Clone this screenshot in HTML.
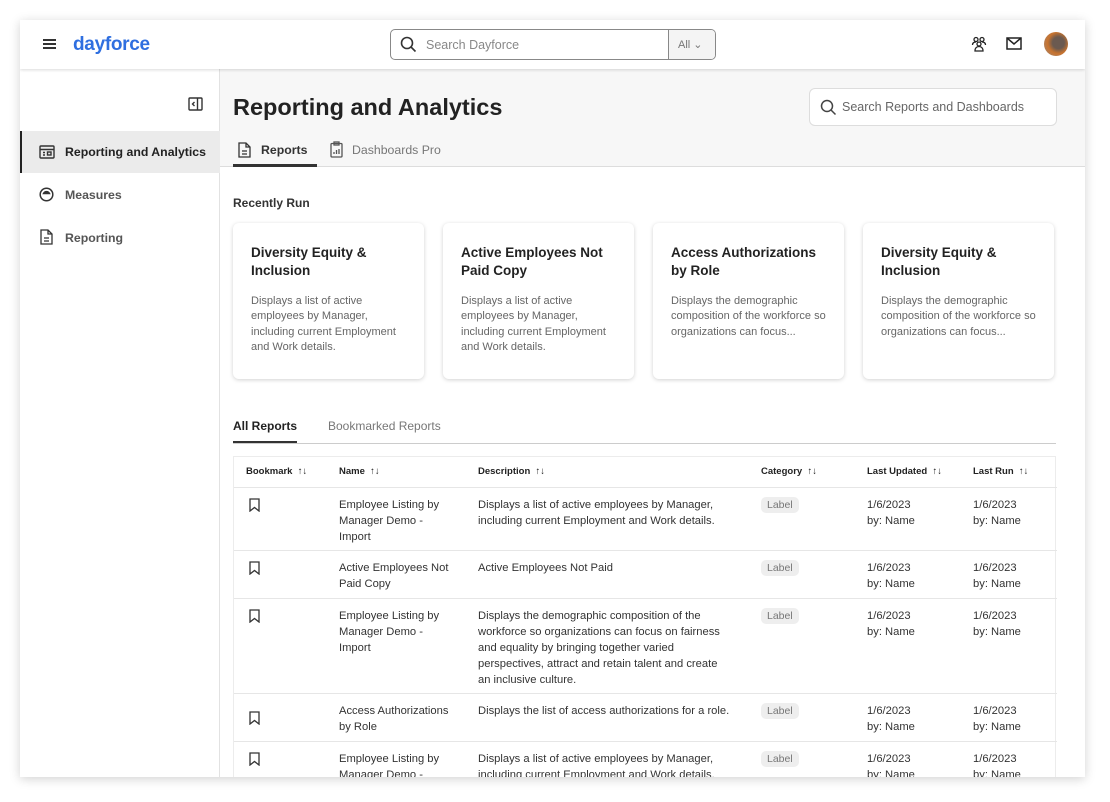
<!DOCTYPE html>
<html><head><meta charset="utf-8"><style>
*{box-sizing:border-box;margin:0;padding:0}
body{width:1110px;height:802px;background:#fff;font-family:"Liberation Sans",sans-serif;color:#222;position:relative;overflow:hidden}
.win{position:absolute;left:20px;top:20px;width:1065px;height:757px;background:#fff;box-shadow:0 2px 10px rgba(0,0,0,.18);overflow:hidden}
.top{position:absolute;left:0;top:0;width:1065px;height:49px;background:#fff;box-shadow:0 1px 3px rgba(0,0,0,.15);z-index:2}
.side{position:absolute;left:0;top:49px;width:200px;height:708px;border-right:1px solid #e2e2e2;background:#fff}
.main{position:absolute;left:200px;top:49px;width:865px;height:708px;background:#fff}
.hdr{position:absolute;left:0;top:0;width:865px;height:98px;background:#f7f7f7;border-bottom:1px solid #ddd}
.abs{position:absolute}
.card{position:absolute;top:154px;width:191px;height:156px;background:#fff;border-radius:6px;box-shadow:0 1px 4px rgba(0,0,0,.18);padding:21px 18px}
.card h3{font-size:13.5px;line-height:17.5px;font-weight:bold;color:#222;margin-bottom:15px}
.card p{font-size:11px;line-height:15.3px;color:#666}
.th{position:absolute;top:9px;font-size:9.5px;font-weight:bold;color:#222}
.row{position:absolute;left:0;width:823px;border-top:1px solid #e6e6e6}
.c{position:absolute;top:9px;font-size:11.2px;line-height:16px;color:#333}
.lbl{position:absolute;top:9px;left:527px;background:#eee;color:#777;font-size:10.5px;border-radius:5px;padding:2px 6px}
</style></head><body>
<div class="win">
<div class="top">
 <div class="abs" style="left:23px;top:19px;width:13px;height:2px;background:#333;box-shadow:0 4px 0 #333,0 8px 0 #333"></div>
 <div class="abs" style="left:53px;top:14px;font-size:19px;font-weight:bold;color:#2f6fe0;letter-spacing:-0.3px">dayforce</div>
 <div class="abs" style="left:370px;top:9px;width:326px;height:31px;border:1px solid #888;border-radius:5px;background:#fff;overflow:hidden">
  <svg class="abs" style="left:9px;top:6px" width="17" height="17" viewBox="0 0 17 17"><circle cx="7" cy="7" r="5.5" fill="none" stroke="#333" stroke-width="1.6"/><path d="M11 11l4.5 4.5" stroke="#333" stroke-width="1.6"/></svg>
  <div class="abs" style="left:35px;top:8px;font-size:12.5px;color:#888">Search Dayforce</div>
  <div class="abs" style="left:277px;top:0;width:49px;height:31px;border-left:1px solid #888;background:#f4f4f4;font-size:11px;color:#777;padding:8px 0 0 9px">All &#8964;</div>
 </div>
 <svg class="abs" style="left:951px;top:16px" width="16" height="16" viewBox="0 0 16 16" fill="none" stroke="#222" stroke-width="1.3"><circle cx="5" cy="3.5" r="2"/><circle cx="11" cy="3.5" r="2"/><circle cx="8" cy="8" r="2"/><path d="M1.5 9c0-2 1.5-3 3.5-3M14.5 9c0-2-1.5-3-3.5-3M4 15c0-3 1.8-4.5 4-4.5s4 1.5 4 4.5z"/></svg>
 <svg class="abs" style="left:986px;top:17px" width="16" height="13" viewBox="0 0 16 13" fill="none" stroke="#222" stroke-width="1.5"><rect x="1" y="1" width="14" height="11"/><path d="M1 1l7 6 7-6"/></svg>
 <div class="abs" style="left:1024px;top:12px;width:24px;height:24px;border-radius:50%;background:radial-gradient(circle at 60% 45%,#6b5a50 0 30%,#c8732e 55%,#9a8a80 100%)"></div>
</div>
<div class="side">
 <svg class="abs" style="left:168px;top:28px" width="15" height="14" viewBox="0 0 15 14" fill="none" stroke="#333" stroke-width="1.4"><rect x="1" y="1" width="13" height="12" rx="1"/><path d="M9.5 1v12M6.5 5l-2 2 2 2"/></svg>
 <div class="abs" style="left:0;top:62px;width:200px;height:42px;background:#ebebeb;border-left:2px solid #222"></div>
 <svg class="abs" style="left:19px;top:76px" width="16" height="14" viewBox="0 0 16 14" fill="none" stroke="#333" stroke-width="1.4"><rect x="1" y="1" width="14" height="12" rx="1"/><path d="M1 4.5h14M4 7.5h2M4 10h2"/><rect x="8.5" y="7" width="3.5" height="3"/></svg>
 <div class="abs" style="left:45px;top:76px;font-size:12.3px;font-weight:bold;color:#222">Reporting and Analytics</div>
 <svg class="abs" style="left:19px;top:118px" width="15" height="15" viewBox="0 0 15 15" fill="none" stroke="#333" stroke-width="1.5"><circle cx="7.5" cy="7.5" r="6.3"/><path d="M4.5 6.5a3.3 3.3 0 0 1 6 0z" fill="#333"/></svg>
 <div class="abs" style="left:45px;top:119px;font-size:12.3px;font-weight:bold;color:#555">Measures</div>
 <svg class="abs" style="left:20px;top:160px" width="13" height="16" viewBox="0 0 13 16" fill="none" stroke="#333" stroke-width="1.3"><path d="M1 1h7l4 4v10H1z M8 1v4h4M4 9h5M4 12h5"/></svg>
 <div class="abs" style="left:45px;top:162px;font-size:12.3px;font-weight:bold;color:#555">Reporting</div>
</div>
<div class="main">
 <div class="hdr">
  <div class="abs" style="left:13px;top:25px;font-size:23.5px;font-weight:bold;color:#222">Reporting and Analytics</div>
  <div class="abs" style="left:589px;top:19px;width:248px;height:38px;border:1px solid #ddd;border-radius:6px;background:#fff">
   <svg class="abs" style="left:10px;top:10px" width="17" height="17" viewBox="0 0 17 17"><circle cx="7" cy="7" r="5.5" fill="none" stroke="#444" stroke-width="1.5"/><path d="M11 11l4.5 4.5" stroke="#444" stroke-width="1.5"/></svg>
   <div class="abs" style="left:32px;top:11px;font-size:12.5px;color:#666">Search Reports and Dashboards</div>
  </div>
  <svg class="abs" style="left:18px;top:73px" width="13" height="16" viewBox="0 0 13 16" fill="none" stroke="#333" stroke-width="1.3"><path d="M1 1h7l4 4v10H1z M8 1v4h4M4 9h5M4 12h5"/></svg>
  <div class="abs" style="left:41px;top:74px;font-size:12.3px;font-weight:bold;color:#333">Reports</div>
  <div class="abs" style="left:13px;top:95px;width:84px;height:3px;background:#333"></div>
  <svg class="abs" style="left:110px;top:72px" width="13" height="17" viewBox="0 0 13 17" fill="none" stroke="#555" stroke-width="1.3"><rect x="1" y="2.5" width="11" height="13.5" rx="1"/><rect x="4" y="1" width="5" height="3"/><path d="M4 13v-2M6.5 13v-4M9 13v-5"/></svg>
  <div class="abs" style="left:132px;top:74px;font-size:12.3px;color:#777">Dashboards Pro</div>
 </div>
 <div class="abs" style="left:13px;top:127px;font-size:12px;font-weight:bold;color:#333">Recently Run</div>
 <div class="card" style="left:13px"><h3>Diversity Equity &amp; Inclusion</h3><p>Displays a list of active employees by Manager, including current Employment and Work details.</p></div>
 <div class="card" style="left:223px"><h3>Active Employees Not Paid Copy</h3><p>Displays a list of active employees by Manager, including current Employment and Work details.</p></div>
 <div class="card" style="left:433px"><h3>Access Authorizations by Role</h3><p>Displays the demographic composition of the workforce so organizations can focus...</p></div>
 <div class="card" style="left:643px"><h3>Diversity Equity &amp; Inclusion</h3><p>Displays the demographic composition of the workforce so organizations can focus...</p></div>
 <div class="abs" style="left:13px;top:350px;font-size:12px;font-weight:bold;color:#222">All Reports</div>
 <div class="abs" style="left:108px;top:350px;font-size:12px;color:#777">Bookmarked Reports</div>
 <div class="abs" style="left:13px;top:374px;width:823px;height:1px;background:#ccc"></div>
 <div class="abs" style="left:13px;top:372px;width:64px;height:2px;background:#333"></div>
 <div class="abs" style="left:13px;top:387px;width:823px;height:330px;border:1px solid #ececec;border-bottom:none">
  <div class="th" style="left:12px">Bookmark &nbsp;↑↓</div>
  <div class="th" style="left:105px">Name &nbsp;↑↓</div>
  <div class="th" style="left:244px">Description &nbsp;↑↓</div>
  <div class="th" style="left:527px">Category &nbsp;↑↓</div>
  <div class="th" style="left:633px">Last Updated &nbsp;↑↓</div>
  <div class="th" style="left:739px">Last Run &nbsp;↑↓</div>
  <div class="row" style="top:30px;height:64px"><svg class="abs" style="left:15px;top:10px" width="11" height="14" viewBox="0 0 11 14" fill="none" stroke="#333" stroke-width="1.3"><path d="M1 1h9v12l-4.5-3.5L1 13z"/></svg><div class="c" style="left:105px">Employee Listing by<br>Manager Demo -<br>Import</div><div class="c" style="left:244px">Displays a list of active employees by Manager,<br>including current Employment and Work details.</div><div class="lbl">Label</div><div class="c" style="left:633px">1/6/2023<br>by: Name</div><div class="c" style="left:739px">1/6/2023<br>by: Name</div></div>
  <div class="row" style="top:93px;height:48px"><svg class="abs" style="left:15px;top:10px" width="11" height="14" viewBox="0 0 11 14" fill="none" stroke="#333" stroke-width="1.3"><path d="M1 1h9v12l-4.5-3.5L1 13z"/></svg><div class="c" style="left:105px">Active Employees Not<br>Paid Copy</div><div class="c" style="left:244px">Active Employees Not Paid</div><div class="lbl">Label</div><div class="c" style="left:633px">1/6/2023<br>by: Name</div><div class="c" style="left:739px">1/6/2023<br>by: Name</div></div>
  <div class="row" style="top:141px;height:95px"><svg class="abs" style="left:15px;top:10px" width="11" height="14" viewBox="0 0 11 14" fill="none" stroke="#333" stroke-width="1.3"><path d="M1 1h9v12l-4.5-3.5L1 13z"/></svg><div class="c" style="left:105px">Employee Listing by<br>Manager Demo -<br>Import</div><div class="c" style="left:244px">Displays the demographic composition of the<br>workforce so organizations can focus on fairness<br>and equality by bringing together varied<br>perspectives, attract and retain talent and create<br>an inclusive culture.</div><div class="lbl">Label</div><div class="c" style="left:633px">1/6/2023<br>by: Name</div><div class="c" style="left:739px">1/6/2023<br>by: Name</div></div>
  <div class="row" style="top:236px;height:48px"><svg class="abs" style="left:15px;top:17px" width="11" height="14" viewBox="0 0 11 14" fill="none" stroke="#333" stroke-width="1.3"><path d="M1 1h9v12l-4.5-3.5L1 13z"/></svg><div class="c" style="left:105px">Access Authorizations<br>by Role</div><div class="c" style="left:244px">Displays the list of access authorizations for a role.</div><div class="lbl">Label</div><div class="c" style="left:633px">1/6/2023<br>by: Name</div><div class="c" style="left:739px">1/6/2023<br>by: Name</div></div>
  <div class="row" style="top:284px;height:48px"><svg class="abs" style="left:15px;top:10px" width="11" height="14" viewBox="0 0 11 14" fill="none" stroke="#333" stroke-width="1.3"><path d="M1 1h9v12l-4.5-3.5L1 13z"/></svg><div class="c" style="left:105px">Employee Listing by<br>Manager Demo -</div><div class="c" style="left:244px">Displays a list of active employees by Manager,<br>including current Employment and Work details.</div><div class="lbl">Label</div><div class="c" style="left:633px">1/6/2023<br>by: Name</div><div class="c" style="left:739px">1/6/2023<br>by: Name</div></div>
 </div>
</div>
</div>
</body></html>
